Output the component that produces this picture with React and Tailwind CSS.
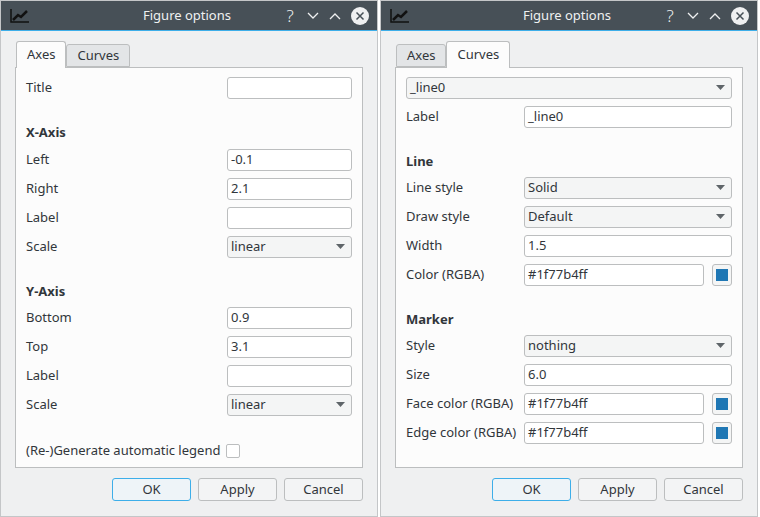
import React from "react";

const Caret = () => (
  <svg width="9" height="5" viewBox="0 0 9 5" className="shrink-0">
    <path d="M0 0h9L4.5 5z" fill="#5f6569" />
  </svg>
);

const Field = ({ value = "", className = "" }) => (
  <div className={"h-[22px] border border-[#bcbebf] rounded-[3px] bg-white px-[3px] flex items-center " + className}>
    {value}
  </div>
);

const Combo = ({ value, className = "" }) => (
  <div className={"h-[22px] border border-[#bcbebf] rounded-[3px] bg-[#f4f5f5] pl-[3px] pr-[6px] flex items-center justify-between " + className}>
    <span>{value}</span>
    <Caret />
  </div>
);

const Swatch = () => (
  <div className="w-[20px] h-[22px] border border-[#bcbebf] rounded-[3px] bg-[#f4f5f5] flex items-center justify-center">
    <div className="w-[12px] h-[12px] bg-[#1f77b4]" />
  </div>
);

const Row = ({ label, children, labelW }) => (
  <div className="h-[29px] flex items-center">
    <div className={labelW + " whitespace-nowrap"}>{label}</div>
    <div className="flex-1 flex justify-end">{children}</div>
  </div>
);

const Header = ({ children, mt }) => (
  <div className={"h-[20px] flex items-center font-bold " + mt}>{children}</div>
);

const TitleBar = () => (
  <div className="h-[30px] bg-[#475057] flex items-center px-[8px] text-[#eff0f1] border-b border-[#3daee9]">
    <svg width="22" height="16" viewBox="0 0 22 16">
      <path d="M2 1v13h18" stroke="#111" strokeWidth="1.5" fill="none" />
      <path d="M4 12l5-5 3 2 6-6" stroke="#111" strokeWidth="2.5" fill="none" />
    </svg>
    <div className="flex-1 text-center text-[13px] pl-[60px]">Figure options</div>
    <div className="flex items-center gap-[10px] text-[17px] font-light">
      <span className="w-[14px] text-center">?</span>
      <svg width="12" height="8" viewBox="0 0 12 8"><path d="M1 1l5 5 5-5" stroke="#eff0f1" strokeWidth="1.3" fill="none" /></svg>
      <svg width="12" height="8" viewBox="0 0 12 8"><path d="M1 7l5-5 5 5" stroke="#eff0f1" strokeWidth="1.3" fill="none" /></svg>
      <svg width="18" height="18" viewBox="0 0 18 18">
        <circle cx="9" cy="9" r="9" fill="#eff0f1" />
        <path d="M5.5 5.5l7 7M12.5 5.5l-7 7" stroke="#475057" strokeWidth="1.5" />
      </svg>
    </div>
  </div>
);

const Tabs = ({ active }) => (
  <div className="flex items-end h-[27px] pl-[1px]">
    {["Axes", "Curves"].map((t) => (
      <div
        key={t}
        className={
          "border border-[#bcbebf] rounded-t-[3px] px-[10px] flex items-center " +
          (t === active ? "h-[27px] bg-[#fcfcfc] border-b-0 relative z-10 mb-[-1px]" : "h-[23px] bg-[#e3e5e7]")
        }
      >
        {t}
      </div>
    ))}
  </div>
);

const Buttons = () => (
  <div className="flex justify-end gap-[7px] mt-[10px]">
    <div className="w-[79px] h-[23px] border border-[#3daee9] bg-[#eef4f8] rounded-[3px] flex items-center justify-center">OK</div>
    <div className="w-[79px] h-[23px] border border-[#bcbebf] bg-[#f3f4f5] rounded-[3px] flex items-center justify-center">Apply</div>
    <div className="w-[79px] h-[23px] border border-[#bcbebf] bg-[#f3f4f5] rounded-[3px] flex items-center justify-center">Cancel</div>
  </div>
);

const Window = ({ active, children }) => (
  <div className="w-[378px] h-[517px] bg-[#eff0f1] border border-[#c4c6c8] flex flex-col">
    <TitleBar />
    <div className="px-[14px] pt-[9px]">
      <Tabs active={active} />
      <div className="h-[401px] bg-[#fcfcfc] border border-[#bcbebf] pt-[5px] px-[10px]">{children}</div>
      <Buttons />
    </div>
  </div>
);

export default function App() {
  const lw = "w-[116px]";
  return (
    <div className="w-[760px] h-[517px] flex gap-[2px] bg-white text-[13px] text-[#31363b]" style={{ fontFamily: '"Noto Sans", sans-serif' }}>
      <Window active="Axes">
        <Row label="Title" labelW="w-[200px]"><Field className="w-[125px]" /></Row>
        <Header mt="mt-[21px]">X-Axis</Header>
        <div className="mt-[2px]">
          <Row label="Left" labelW="w-[200px]"><Field className="w-[125px]" value="-0.1" /></Row>
          <Row label="Right" labelW="w-[200px]"><Field className="w-[125px]" value="2.1" /></Row>
          <Row label="Label" labelW="w-[200px]"><Field className="w-[125px]" /></Row>
          <Row label="Scale" labelW="w-[200px]"><Combo className="w-[125px]" value="linear" /></Row>
        </div>
        <Header mt="mt-[21px]">Y-Axis</Header>
        <div className="mt-[1px]">
          <Row label="Bottom" labelW="w-[200px]"><Field className="w-[125px]" value="0.9" /></Row>
          <Row label="Top" labelW="w-[200px]"><Field className="w-[125px]" value="3.1" /></Row>
          <Row label="Label" labelW="w-[200px]"><Field className="w-[125px]" /></Row>
          <Row label="Scale" labelW="w-[200px]"><Combo className="w-[125px]" value="linear" /></Row>
        </div>
        <div className="mt-[17px] h-[29px] flex items-center gap-[6px]">
          <span>(Re-)Generate automatic legend</span>
          <div className="w-[14px] h-[14px] border border-[#bcbebf] rounded-[2px] bg-white" />
        </div>
      </Window>
      <Window active="Curves">
        <div className="h-[29px] flex items-center"><Combo className="w-full" value="_line0" /></div>
        <Row label="Label" labelW={lw}><Field className="w-[208px]" value="_line0" /></Row>
        <Header mt="mt-[21px]">Line</Header>
        <div className="mt-[1px]">
          <Row label="Line style" labelW={lw}><Combo className="w-[208px]" value="Solid" /></Row>
          <Row label="Draw style" labelW={lw}><Combo className="w-[208px]" value="Default" /></Row>
          <Row label="Width" labelW={lw}><Field className="w-[208px]" value="1.5" /></Row>
          <Row label="Color (RGBA)" labelW={lw}>
            <div className="flex gap-[8px]"><Field className="w-[180px]" value="#1f77b4ff" /><Swatch /></div>
          </Row>
        </div>
        <Header mt="mt-[21px]">Marker</Header>
        <div className="mt-[1px]">
          <Row label="Style" labelW={lw}><Combo className="w-[208px]" value="nothing" /></Row>
          <Row label="Size" labelW={lw}><Field className="w-[208px]" value="6.0" /></Row>
          <Row label="Face color (RGBA)" labelW={lw}>
            <div className="flex gap-[8px]"><Field className="w-[180px]" value="#1f77b4ff" /><Swatch /></div>
          </Row>
          <Row label="Edge color (RGBA)" labelW={lw}>
            <div className="flex gap-[8px]"><Field className="w-[180px]" value="#1f77b4ff" /><Swatch /></div>
          </Row>
        </div>
      </Window>
    </div>
  );
}
